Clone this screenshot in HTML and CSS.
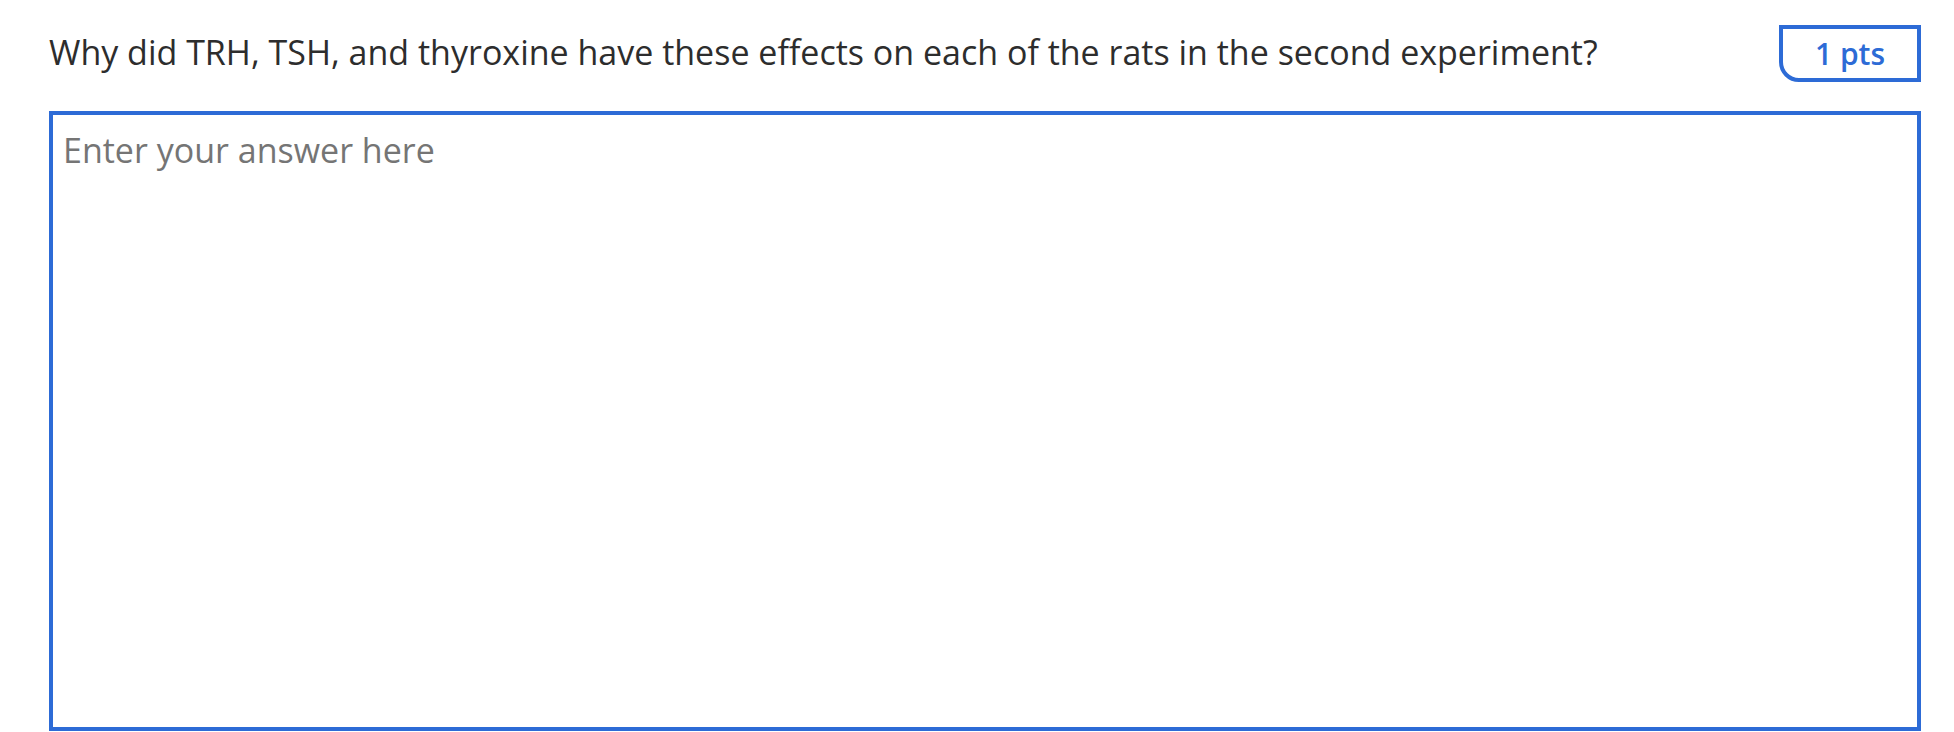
FILE: index.html
```html
<!DOCTYPE html>
<html lang="en">
<head>
<meta charset="utf-8">
<title>Question</title>
<link rel="stylesheet" href="styles.css">
</head>
<body>
<div class="question">
  <div class="header">
    <div class="prompt">Why did TRH, TSH, and thyroxine have these effects on each of the rats in the second experiment?</div>
    <div class="points">1 pts</div>
  </div>
  <textarea class="answer" placeholder="Enter your answer here"></textarea>
</div>
</body>
</html>
```

FILE: styles.css
```css
html, body {
  margin: 0;
  padding: 0;
  background: #ffffff;
}
body {
  font-family: "Open Sans", "Noto Sans", sans-serif;
  color: #2d2d2d;
}
.question {
  padding: 25px 33px 0 49px;
  display: flex;
  flex-direction: column;
  gap: 29px;
}
.header {
  display: flex;
  justify-content: space-between;
  align-items: flex-start;
}
.prompt {
  font-size: 34px;
  line-height: 46px;
  margin-top: 4px;
  color: #2d2d2d;
}
.points {
  box-sizing: border-box;
  width: 142px;
  height: 57px;
  border: 4px solid #2d6bd6;
  border-bottom-left-radius: 20px;
  color: #2d6bd6;
  font-size: 30px;
  font-weight: 600;
  display: flex;
  align-items: center;
  justify-content: center;
}
.answer {
  box-sizing: border-box;
  display: block;
  width: 100%;
  height: 620px;
  margin: 0;
  border: 4px solid #2d6bd6;
  border-radius: 0;
  padding: 12px 10px;
  font-family: "Open Sans", "Noto Sans", sans-serif;
  font-size: 34px;
  line-height: 46px;
  color: #2d2d2d;
  resize: none;
  outline: none;
  background: #ffffff;
}
.answer::placeholder {
  color: #757575;
  opacity: 1;
}
```
